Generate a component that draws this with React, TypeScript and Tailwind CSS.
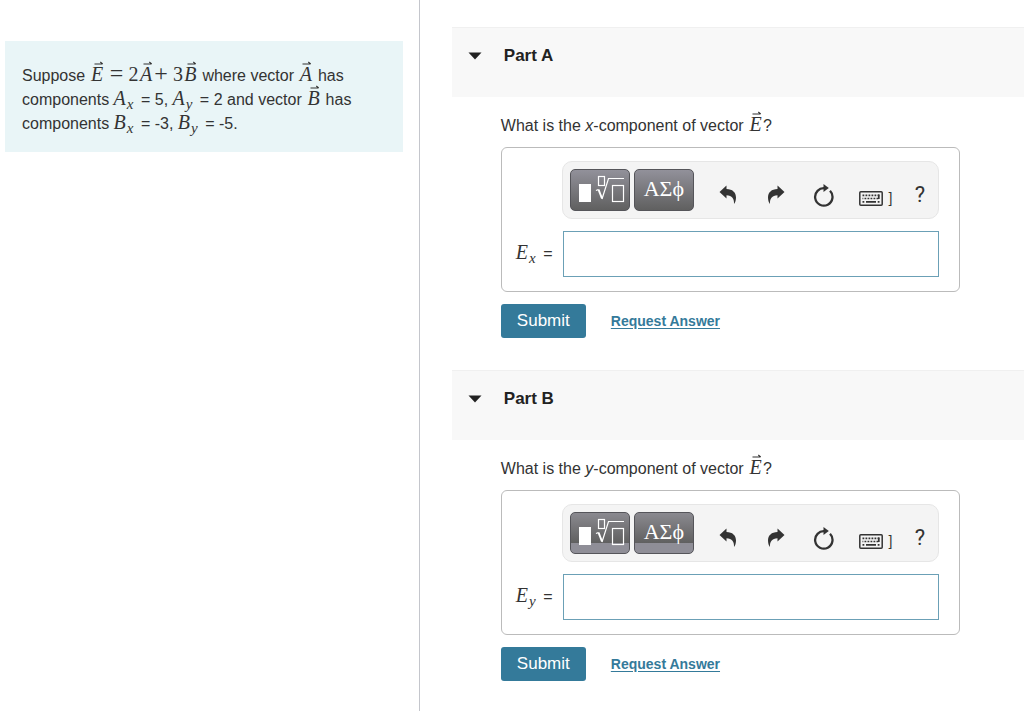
import { useState } from 'react'
import type { ReactNode } from 'react'

interface PartProps {
  title: string
  component: 'x' | 'y'
  // Gradient used behind the two template buttons
  buttonClass: string
}

function Num({ children }: { children: ReactNode }) {
  return <span className="font-['Liberation_Serif',serif] text-[20px] leading-none">{children}</span>
}

function Op({ children }: { children: ReactNode }) {
  return (
    <span className="inline-block w-[15px] text-center font-['Liberation_Serif',serif] text-[24px] leading-4">
      {children}
    </span>
  )
}

function Vec({ name }: { name: string }) {
  return (
    <span className="relative inline-block w-[15px] text-center font-['Liberation_Serif',serif] text-[20px] italic leading-none">
      {name}
      <svg viewBox="0 0 10 6" className="absolute -top-[3px] left-[4px] h-[6px] w-[10px]" aria-hidden="true">
        <path d="M0.5 3H8.5M6.3 1L8.7 3" fill="none" stroke="currentColor" strokeWidth="1.1" />
      </svg>
    </span>
  )
}

function Comp({ name, axis }: { name: string; axis: string }) {
  return (
    <span className="font-['Liberation_Serif',serif] text-[20px] italic leading-none">
      {name}
      <sub className="ml-px mr-[3px] text-[15px]">{axis}</sub>
    </span>
  )
}

function TemplateIcon() {
  return (
    <svg viewBox="0 0 60 42" className="h-[42px] w-[60px]" aria-hidden="true">
      <rect x="9" y="15" width="12" height="18" fill="#fff" />
      <g fill="none" stroke="#fff" strokeWidth="1.2">
        <rect x="28.5" y="7.5" width="6" height="9" />
        <path d="M26 21.5L28.5 20.5" />
        <path d="M28.5 20.5L32 29.5" strokeWidth="2" />
        <path d="M32 30L38.5 9.5H54" />
        <rect x="42.5" y="16.5" width="11" height="16" />
      </g>
    </svg>
  )
}

function UndoIcon({ flipped = false }: { flipped?: boolean }) {
  return (
    <svg
      viewBox="0 0 18 20"
      className={`h-5 w-[18px] ${flipped ? '-scale-x-100' : ''}`}
      aria-hidden="true"
    >
      <path
        fill="#333"
        d="M0.5 7L7.5 0.5V4C13.5 4 17 7.5 17 12.5C17 15 16.3 17.5 15 19C15.4 14 13 10.3 7.5 10.3V13.5Z"
      />
    </svg>
  )
}

function ResetIcon() {
  return (
    <svg viewBox="0 0 22 24" className="h-6 w-[22px]" aria-hidden="true">
      <path
        d="M12 5.3A8.7 8.7 0 1 0 17 7.8"
        fill="none"
        stroke="#333"
        strokeWidth="2.3"
      />
      <path d="M10.5 1L15.8 5L10.5 9Z" fill="#333" />
    </svg>
  )
}

function KeyboardIcon() {
  return (
    <svg viewBox="0 0 24 15" className="h-[15px] w-6 shrink-0" aria-hidden="true">
      <rect x="0.8" y="0.8" width="22.4" height="13.4" rx="1" fill="none" stroke="#333" strokeWidth="1.5" />
      <g stroke="#333" strokeWidth="1.7">
        <path d="M3.5 4.3H20.5" strokeDasharray="1.8 1.2" />
        <path d="M3.5 7.5H20.5" strokeDasharray="1.8 1.2" strokeDashoffset="1" />
        <path d="M3.5 10.9H5.3M7 10.9H17M18.7 10.9H20.5M19.8 3.5V8" />
      </g>
    </svg>
  )
}

function Part({ title, component, buttonClass }: PartProps) {
  const [open, setOpen] = useState(true)
  const [answer, setAnswer] = useState('')
  const inputId = `answer-${component}`
  const toolClass = 'flex h-[42px] w-12 items-center justify-center pt-[10px]'

  return (
    <section className="mb-8">
      <h2 className="h-[70px] border-t border-[#f0f0f0] bg-[#f8f8f8] pl-4 pt-4">
        <button
          onClick={() => setOpen(!open)}
          aria-expanded={open}
          className="flex items-center gap-[22px] text-[17px] font-bold leading-6 text-[#222]"
        >
          <svg viewBox="0 0 14 8" className="h-2 w-[14px]" aria-hidden="true">
            <path d="M0.5 0.5H13.5L7 7.5Z" fill="#222" />
          </svg>
          {title}
        </button>
      </h2>
      {open && (
        <div className="pl-[49px]">
          <p className="pb-[9px] pt-[17px] leading-6">
            What is the <i>{component}</i>-component of vector <Vec name="E" />?
          </p>
          <div className="w-full max-w-[459px] rounded-md border border-[#bbb] pb-[14px] pr-5 pt-[13px]">
            <div className="ml-[60px] flex h-[58px] rounded-[10px] border border-[#e6e6e6] bg-[#f4f4f4] pl-[7px] pt-[7px]">
              <button
                aria-label="Templates"
                className={`h-[42px] w-[60px] shrink-0 rounded-[5px] border ${buttonClass}`}
              >
                <span className="-m-px block">
                  <TemplateIcon />
                </span>
              </button>
              <button
                aria-label="Symbols"
                className={`ml-1 h-[42px] w-[60px] shrink-0 rounded-[5px] border pb-[3px] font-['Liberation_Serif','DejaVu_Serif',serif] text-[22px] leading-none text-white ${buttonClass}`}
              >
                ΑΣϕ
              </button>
              <button aria-label="Undo" className={`ml-[10px] ${toolClass}`}>
                <UndoIcon />
              </button>
              <button aria-label="Redo" className={toolClass}>
                <UndoIcon flipped />
              </button>
              <button aria-label="Reset" className={toolClass}>
                <ResetIcon />
              </button>
              <button
                aria-label="Keyboard shortcuts"
                className="flex h-[42px] w-14 items-center justify-center gap-[5px] pt-4 text-[14px] leading-4 text-[#333]"
              >
                <KeyboardIcon />
                <span>]</span>
              </button>
              <button
                aria-label="Help"
                className="flex h-[42px] w-8 items-center justify-center pt-[10px] font-['Roboto',sans-serif] text-[22px] leading-none text-[#333]"
              >
                ?
              </button>
            </div>
            <div className="mt-3 flex items-center">
              <label htmlFor={inputId} className="w-[61px] shrink-0 pl-[14px] leading-6">
                <Comp name="E" axis={component} /> =
              </label>
              <input
                id={inputId}
                type="text"
                value={answer}
                onChange={(e) => setAnswer(e.target.value)}
                className="h-[46px] min-w-0 flex-1 border border-[#6ba0b6] bg-white px-2 outline-none"
              />
            </div>
          </div>
          <div className="mt-3 flex items-center gap-[25px]">
            <button className="h-[34px] w-[85px] rounded-[3px] bg-[#347a9a] text-[17px] text-white">
              Submit
            </button>
            <a href="#request" className="text-[14px] font-bold text-[#347a9a] underline underline-offset-2">
              Request Answer
            </a>
          </div>
        </div>
      )}
    </section>
  )
}

export default function App() {
  return (
    <div className="flex min-h-screen bg-white font-['Liberation_Sans',Arial,sans-serif] text-[16px] text-[#333]">
      <aside className="w-[41%] shrink-0 border-r border-[#c4c6cc] pl-[5px] pr-4 pt-[41px]">
        <p className="bg-[#e9f5f7] pb-4 pl-[17px] pr-4 pt-[23px] leading-6">
          Suppose <Vec name="E" /> <Op>=</Op> <Num>2</Num>
          <Vec name="A" />
          <Op>+</Op> <Num>3</Num>
          <Vec name="B" /> where vector <Vec name="A" /> has{' '}
          components <Comp name="A" axis="x" /> = 5, <Comp name="A" axis="y" /> = 2 and vector{' '}
          <Vec name="B" /> has{' '}
          components <Comp name="B" axis="x" /> = -3, <Comp name="B" axis="y" /> = -5.
        </p>
      </aside>
      <main className="min-w-0 flex-1 pl-8 pt-[27px]">
        <Part
          title="Part A"
          component="x"
          buttonClass="border-[#55555a] bg-linear-to-b from-[#92919a] to-[#606060]"
        />
        <Part
          title="Part B"
          component="y"
          buttonClass="border-[#55555a] bg-linear-to-b from-[#8b8a90] from-0% via-[#606060] via-75% to-[#8f8e97] to-75%"
        />
      </main>
    </div>
  )
}
